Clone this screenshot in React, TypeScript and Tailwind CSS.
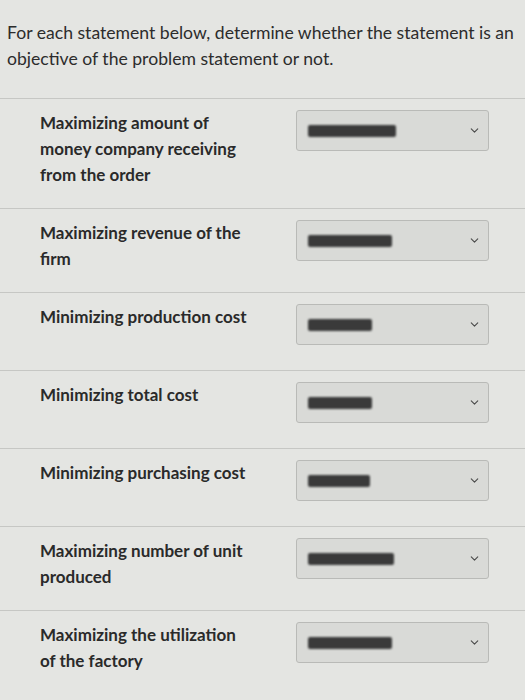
import { ChevronDown } from "lucide-react";

type Row = { label: string; bar: number };

const ROWS: Row[] = [
  { label: "Maximizing amount of money company receiving from the order", bar: 88 },
  { label: "Maximizing revenue of the firm", bar: 84 },
  { label: "Minimizing production cost", bar: 64 },
  { label: "Minimizing total cost", bar: 64 },
  { label: "Minimizing purchasing cost", bar: 62 },
  { label: "Maximizing number of unit produced", bar: 86 },
  { label: "Maximizing the utilization of the factory", bar: 84 },
];

function Select({ bar }: { bar: number }) {
  return (
    <div className="flex h-[41px] w-[193px] items-center justify-between rounded-[3px] border border-[#b9bab7] bg-[#d9dad7] pl-[11px] pr-[7px]">
      <div className="h-[12px] rounded-[2px] bg-[#3a3a3a] blur-[1px]" style={{ width: bar }} />
      <ChevronDown size={13} strokeWidth={2} className="text-[#4a4a4a]" />
    </div>
  );
}

export default function App() {
  return (
    <div className="min-h-[700px] bg-[#e4e5e2] font-['Lato',sans-serif] text-[#2c2c2c]">
      <p className="pl-[7px] pr-[2px] pt-[20px] pb-[26px] text-[17.6px] leading-[26px]">
        For each statement below, determine whether the statement is an objective of the problem statement or not.
      </p>
      <div className="border-t border-[#c6c7c4]">
        {ROWS.map((row) => (
          <div
            key={row.label}
            className="flex items-start border-b border-[#c6c7c4] pt-[11px] pb-[20px] pl-[40px] last:border-b-0"
          >
            <p className="min-h-[46px] w-[212px] text-[17px] font-bold leading-[26px] text-[#2a2a2a]">
              {row.label}
            </p>
            <div className="ml-[44px]">
              <Select bar={row.bar} />
            </div>
          </div>
        ))}
      </div>
    </div>
  );
}
